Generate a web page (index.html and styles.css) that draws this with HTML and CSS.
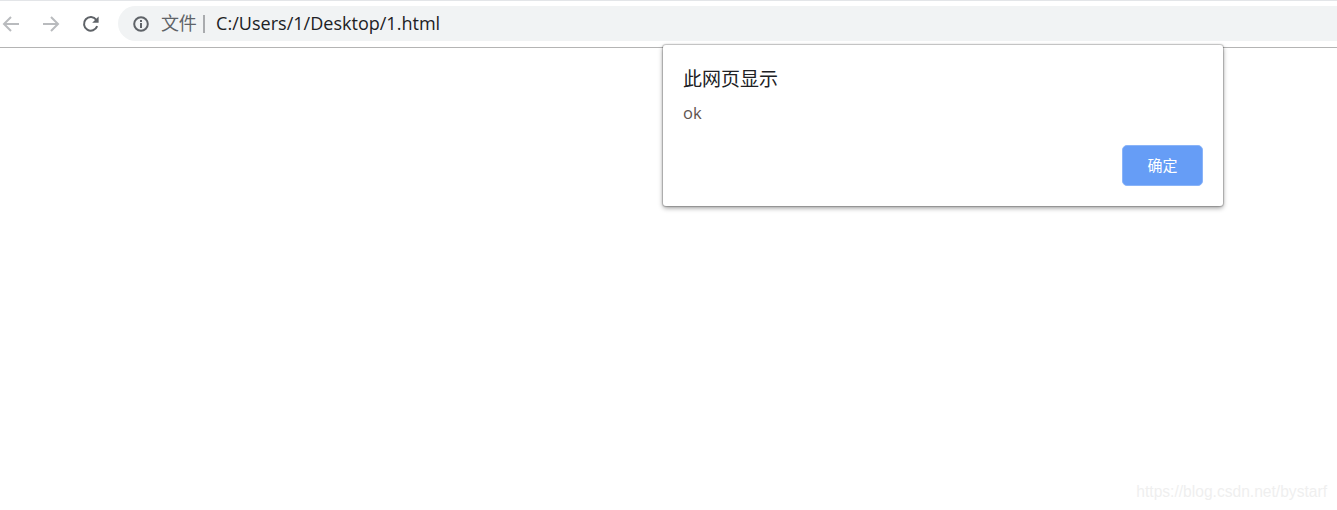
FILE: index.html
```html
<!DOCTYPE html>
<html lang="zh-CN">
<head>
<meta charset="utf-8">
<title>1.html</title>
<link rel="stylesheet" href="styles.css">
</head>
<body>
<header class="toolbar">
  <nav class="nav">
    <svg class="nav-icon back" viewBox="0 0 20 20"><path d="M18 10H3M10 3l-7 7 7 7"/></svg>
    <svg class="nav-icon forward" viewBox="0 0 20 20"><path d="M2 10h15M10 3l7 7-7 7"/></svg>
    <svg class="nav-icon reload" viewBox="0 0 20 20"><path d="M16.2 12.2a6.8 6.8 0 1 1-.9-6.4"/><path class="solid" d="M17.6 2.4v6.4h-6.4z"/></svg>
  </nav>
  <div class="omnibox">
    <svg class="info" viewBox="0 0 18 18"><circle cx="9" cy="9" r="6.8"/><rect class="solid" x="8" y="8" width="2" height="5"/><rect class="solid" x="8" y="5" width="2" height="2"/></svg>
    <span class="scheme">文件</span>
    <span class="sep"></span>
    <span class="url">C:/Users/1/Desktop/1.html</span>
  </div>
</header>
<section class="dialog">
  <h1 class="dialog-title">此网页显示</h1>
  <p class="dialog-msg">ok</p>
  <div class="dialog-actions"><button class="ok" type="button">确定</button></div>
</section>
<div class="watermark">https://blog.csdn.net/bystarf</div>
</body>
</html>
```

FILE: styles.css
```css
* { box-sizing: border-box; }
html, body { margin: 0; height: 100%; background: #fff; overflow: hidden; }
body { font-family: "Open Sans", "Noto Sans CJK SC", sans-serif; position: relative; }
.toolbar {
  height: 48px;
  border-top: 1px solid #e3e5e8;
  border-bottom: 1px solid #b4b4b4;
  padding: 5px 0 0 0;
  display: flex;
  align-items: flex-start;
  background: #fff;
}
.nav { display: flex; width: 118px; height: 35px; align-items: center; padding: 0 0 0 1px; gap: 20px; flex: none; }
.nav-icon { width: 20px; height: 20px; fill: none; stroke-width: 2; flex: none; }
.back, .forward { stroke: #b9bbbe; }
.reload { stroke: #5f6368; }
.reload .solid { fill: #5f6368; stroke: none; }
.omnibox {
  flex: 1;
  height: 35px;
  background: #f1f3f4;
  border-radius: 18px 0 0 18px;
  display: flex;
  align-items: center;
  padding-left: 14px;
}
.info { width: 18px; height: 18px; fill: none; stroke: #5f6368; stroke-width: 2; flex: none; }
.info .solid { fill: #5f6368; stroke: none; }
.scheme { margin: -3px 0 0 11px; font: 18px/24px "Noto Sans CJK SC", sans-serif; color: #5f6368; letter-spacing: -.2px; }
.sep { flex: none; width: 2px; height: 18px; background: #a9abae; margin-left: 6px; }
.url { margin: -2px 0 0 11.5px; font-size: 18.05px; line-height: 24px; color: #202124; }
.dialog {
  position: absolute;
  left: 663px;
  top: 45px;
  width: 560px;
  height: 161px;
  background: #fff;
  border-radius: 3px;
  box-shadow: 0 0 1px 1px rgba(0,0,0,.2), 0 2px 5px rgba(0,0,0,.4);
  padding: 21px 20px 20px;
  display: flex;
  flex-direction: column;
}
.dialog-title { margin: 0; font: 400 19px/24px "Noto Sans CJK SC", sans-serif; color: #202124; }
.dialog-msg { margin: 13px 0 0; font-size: 16.5px; line-height: 20px; color: #5f5550; }
.dialog-actions { margin-top: auto; display: flex; justify-content: flex-end; }
.ok {
  width: 81px;
  height: 41px;
  border: 1px solid #8ab4f8;
  border-radius: 5px;
  background: #669df6;
  color: #fff;
  padding: 0 0 2px;
  font: 15px "Noto Sans CJK SC", sans-serif;
}
.watermark {
  position: absolute;
  right: 10px;
  top: 483px;
  font-family: "Liberation Sans", sans-serif;
  font-size: 15.6px;
  line-height: 18px;
  color: #efefef;
}
```
